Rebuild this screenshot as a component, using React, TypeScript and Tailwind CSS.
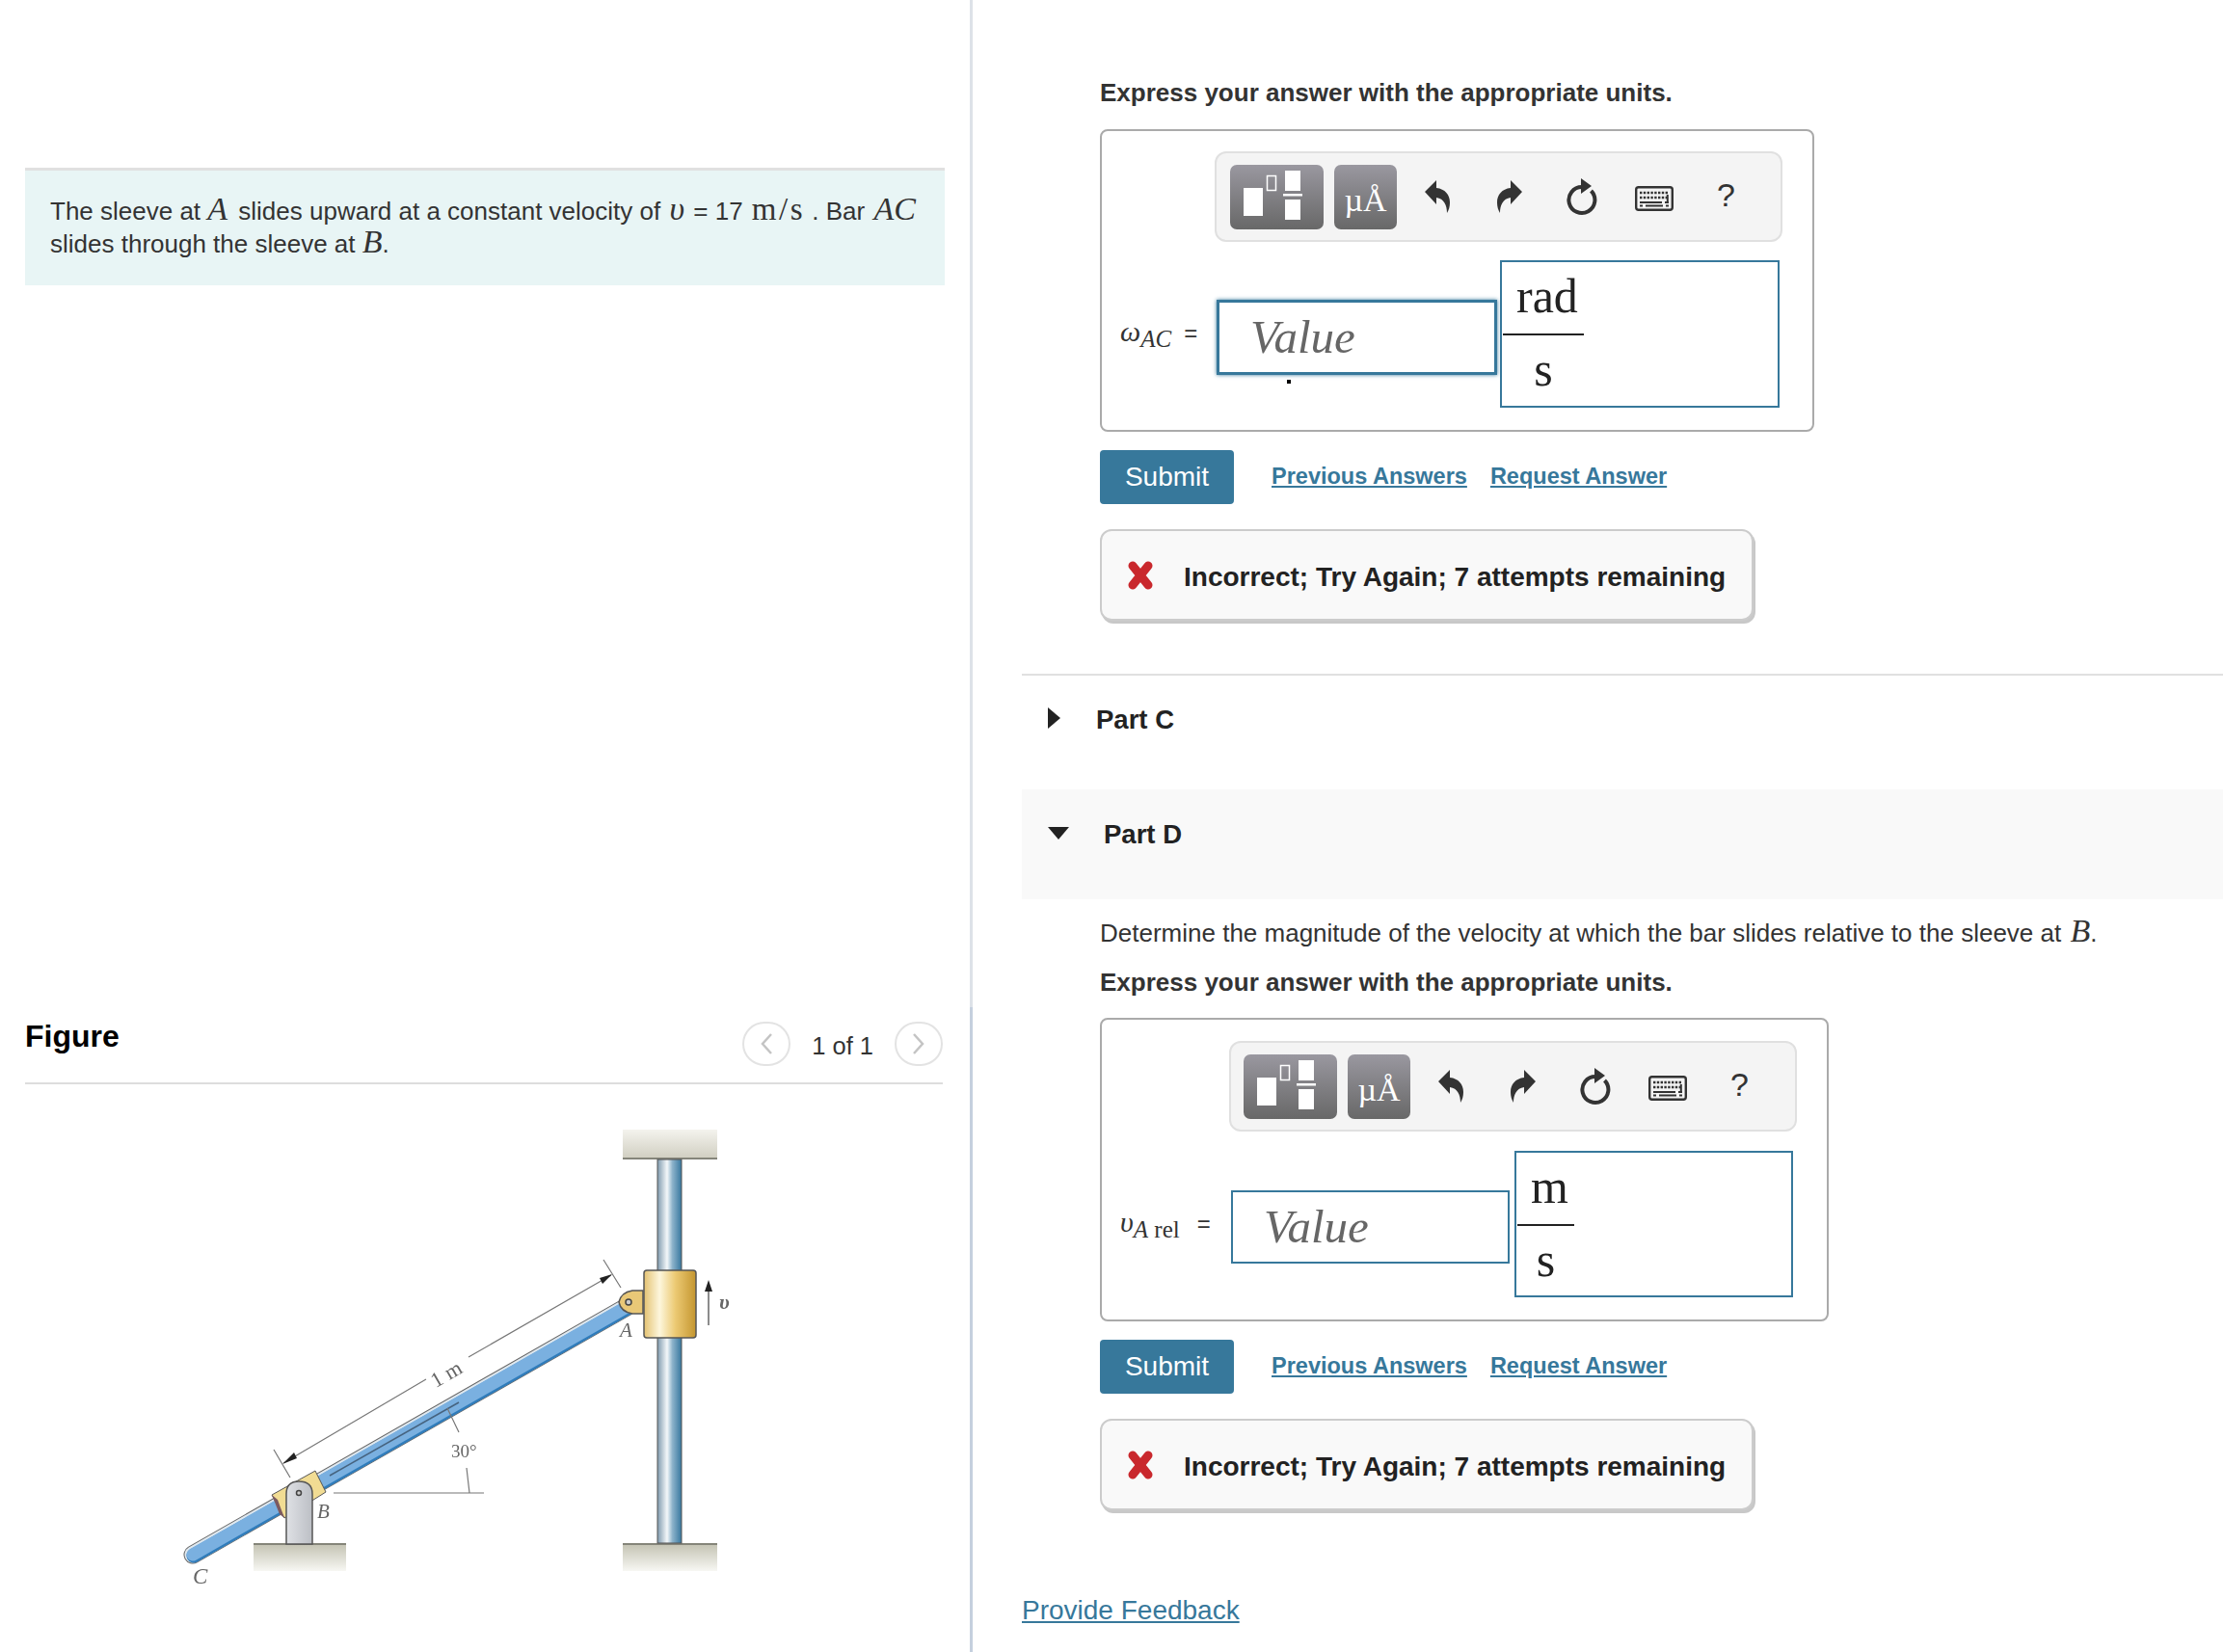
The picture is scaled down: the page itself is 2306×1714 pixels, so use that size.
import React from "react";

const serif = "font-['Liberation_Serif',serif]";

const Undo = ({ flip }: { flip?: boolean }) => (
  <svg width="28" height="36" viewBox="0 0 28 36" className={flip ? "-scale-x-100" : ""}>
    <path d="M1 13 L13 1 V9 C22 10 27 16 27 24 C27 28 26 32 24 35 C24 27 21 20 13 19 V26 Z" fill="#333" />
  </svg>
);

const Reset = () => (
  <svg width="34" height="40" viewBox="0 0 34 40">
    <path d="M17 10 A13.5 13.5 0 1 0 26.5 14" fill="none" stroke="#333" strokeWidth="4" />
    <path d="M16 1 L27 9 L16 17 Z" fill="#333" />
  </svg>
);

const Keyboard = () => (
  <svg width="40" height="26" viewBox="0 0 40 26">
    <rect x="1.2" y="1.2" width="37.6" height="23.6" rx="2.5" fill="none" stroke="#333" strokeWidth="2.4" />
    <path d="M5 7 H35 M5 12 H35" stroke="#333" strokeWidth="2.6" strokeDasharray="2.4 1.4" />
    <path d="M5 17 H28 M31 17 H35 M33.8 9 V18 M5 20.5 H8 M11 20.5 H29 M32 20.5 H35" stroke="#333" strokeWidth="2" />
  </svg>
);

const CrossIcon = () => (
  <svg width="30" height="32" viewBox="0 0 30 32" className="shrink-0">
    <path d="M7 6 L23 26 M23 6 L7 26" stroke="#c9282d" strokeWidth="9" strokeLinecap="round" />
  </svg>
);

const Toolbar = ({ className }: { className: string }) => (
  <div className={`flex h-[94px] w-[589px] items-center rounded-[12px] border-2 border-[#e0e0e0] bg-[#f4f4f4] ${className}`}>
    <div className="h-[67px] w-[97px] rounded-[7px] bg-linear-to-b from-[#9a98a0] to-[#686868]">
      <svg width="97" height="67" viewBox="0 0 97 67">
        <rect x="14" y="24" width="20" height="29" fill="#fff" />
        <rect x="38.5" y="11.5" width="9" height="15" fill="none" stroke="#fff" strokeWidth="1.5" />
        <rect x="57" y="6" width="16" height="21" fill="#fff" />
        <rect x="55" y="30" width="20" height="2.5" fill="#fff" />
        <rect x="57" y="36" width="16" height="21" fill="#fff" />
      </svg>
    </div>
    <div className={`ml-[11px] flex h-[67px] w-[65px] items-end justify-center rounded-[7px] bg-linear-to-b from-[#9a98a0] to-[#686868] pb-[10px] text-[34px] leading-[40px] text-white ${serif}`}>
      µÅ
    </div>
    <div className="ml-[4px] flex w-[75px] justify-center"><Undo /></div>
    <div className="flex w-[75px] justify-center"><Undo flip /></div>
    <div className="flex w-[75px] justify-center"><Reset /></div>
    <div className="flex w-[75px] justify-center pt-[4px]"><Keyboard /></div>
    <div className="flex w-[75px] justify-center pb-[3px] text-[34px] text-[#333]">?</div>
  </div>
);

const Fraction = ({ top }: { top: string }) => (
  <div className={`ml-px flex w-fit flex-col items-center text-[50px] text-[#222] ${serif}`}>
    <div className="flex h-[76px] items-end border-b-2 border-[#222] pb-[13px] pl-[14px] pr-[6px] leading-[52px]">{top}</div>
    <div className="pt-[9px] leading-[52px]">s</div>
  </div>
);

const Value = ({ className, children }: { className: string; children?: React.ReactNode }) => (
  <div className={`relative flex items-center pl-[32px] text-[49px] italic text-[#666] ${serif} ${className}`}>
    Value
    {children}
  </div>
);

const Incorrect = () => (
  <div className="mt-[26px] flex h-[95px] w-[678px] items-center rounded-[12px] border-2 border-[#ccc] bg-[#f9f9f9] pl-[25px] shadow-[2px_3px_0_#c8c8c8]">
    <CrossIcon />
    <span className="ml-[30px] pt-[5px] text-[28px] font-bold text-[#222]">Incorrect; Try Again; 7 attempts remaining</span>
  </div>
);

const Actions = () => (
  <div className="mt-[19px] flex items-center">
    <button className="h-[56px] w-[139px] rounded-[4px] bg-[#37789b] text-[28px] text-white">Submit</button>
    <a href="#" className="ml-[39px] text-[23.5px] font-bold text-[#37789b] underline">Previous Answers</a>
    <a href="#" className="ml-[24px] text-[23.5px] font-bold text-[#37789b] underline">Request Answer</a>
  </div>
);

const Express = ({ className }: { className: string }) => (
  <p className={`ml-[81px] h-[32px] text-[26px] leading-[32px] font-bold text-[#333] ${className}`}>
    Express your answer with the appropriate units.
  </p>
);

const Figure = () => (
  <svg width="620" height="510" viewBox="0 0 620 510" className="ml-[170px] mt-[35px] blur-[0.6px]">
    <defs>
      <linearGradient id="cap" x1="0" y1="0" x2="0" y2="1">
        <stop offset="0" stopColor="#f4f3ee" />
        <stop offset="1" stopColor="#cfcdbf" />
      </linearGradient>
      <linearGradient id="base" x1="0" y1="0" x2="0" y2="1">
        <stop offset="0" stopColor="#c4c3b3" />
        <stop offset="1" stopColor="#f7f7f3" />
      </linearGradient>
      <linearGradient id="pole" x1="0" y1="0" x2="1" y2="0">
        <stop offset="0" stopColor="#7e99ad" />
        <stop offset="0.4" stopColor="#f4f8fa" />
        <stop offset="0.62" stopColor="#8db3cb" />
        <stop offset="1" stopColor="#37779e" />
      </linearGradient>
      <linearGradient id="gold" x1="0" y1="0" x2="1" y2="0">
        <stop offset="0" stopColor="#e4c271" />
        <stop offset="0.3" stopColor="#fdf6dc" />
        <stop offset="0.6" stopColor="#ecca74" />
        <stop offset="1" stopColor="#c4952e" />
      </linearGradient>
      <linearGradient id="post" x1="0" y1="0" x2="1" y2="0">
        <stop offset="0" stopColor="#dfe1e5" />
        <stop offset="1" stopColor="#bcbfc5" />
      </linearGradient>
    </defs>

    <rect x="476" y="12" width="98" height="31" fill="url(#cap)" />
    <rect x="476" y="41" width="98" height="2" fill="#85857a" />
    <rect x="93" y="442" width="96" height="28" fill="url(#base)" />
    <rect x="93" y="441" width="96" height="2" fill="#85857a" />
    <rect x="476" y="442" width="98" height="28" fill="url(#base)" />
    <rect x="476" y="441" width="98" height="2" fill="#85857a" />

    <rect x="512" y="43" width="25" height="398" fill="url(#pole)" stroke="#555" strokeWidth="1" />

    <line x1="30" y1="453" x2="480" y2="196" stroke="#666" strokeWidth="19" strokeLinecap="round" />
    <line x1="30" y1="453" x2="480" y2="196" stroke="#dfe8ef" strokeWidth="17" strokeLinecap="round" />
    <line x1="31" y1="454" x2="481" y2="197" stroke="#2f7cbb" strokeWidth="15" strokeLinecap="round" />
    <line x1="30" y1="453" x2="480" y2="196" stroke="#7ab0e0" strokeWidth="13" strokeLinecap="round" />
    <path d="M172 371 L306 295" stroke="#46637f" strokeWidth="1.5" />

    <path d="M497 179 H486 Q474 181 472 191 Q474 201 486 203 H497 Z" fill="#e9c877" stroke="#555" strokeWidth="1.5" />
    <circle cx="482" cy="191" r="3" fill="#ccc" stroke="#444" strokeWidth="1.5" />
    <rect x="498" y="158" width="54" height="70" rx="3" fill="url(#gold)" stroke="#555" strokeWidth="1.5" />

    <path d="M112 391 L157 366 L168 388 L125 415 Z" fill="#f1dc93" stroke="#555" strokeWidth="1" />
    <path d="M112 391 L118 396 L125 415 L120 411 Z" fill="#7c5a60" />
    <path d="M127 442 V390 Q127 377 140 377 Q154 377 154 390 V442 Z" fill="url(#post)" stroke="#555" strokeWidth="1.5" />
    <circle cx="140" cy="389" r="2.5" fill="#ccc" stroke="#444" strokeWidth="1.5" />

    <path d="M124 358 L272 271 M316 248 L464 163 M114 344 L131 373 M456 147 L474 176" stroke="#777" strokeWidth="1.2" fill="none" />
    <path d="M123 359 L135 347 L138 353 Z M465 162 L452 166 L455 172 Z" fill="#222" />
    <path d="M294 301 L306 326 M314 363 L317 389 M176 389 H332" stroke="#777" strokeWidth="1.2" fill="none" />
    <path d="M565 215 V178" stroke="#666" strokeWidth="1.5" />
    <path d="M565 168 L569 180 H561 Z" fill="#222" />

    <g className={serif} fill="#666">
      <text x="275" y="272" fontSize="22" transform="rotate(-30 294 263)">1 m</text>
      <text x="298" y="352" fontSize="19">30°</text>
      <text x="473" y="227" fontSize="21" fontStyle="italic">A</text>
      <text x="159" y="415" fontSize="21" fontStyle="italic">B</text>
      <text x="30" y="483" fontSize="23" fontStyle="italic">C</text>
      <text x="576" y="198" fontSize="22" fontStyle="italic" fontWeight="bold">υ</text>
    </g>
  </svg>
);

const App = () => {
  return (
    <div className="flex h-[1714px] w-[2306px] overflow-hidden bg-white font-['Liberation_Sans',sans-serif] text-[#333]">
      <aside className="w-[1006px] shrink-0 pt-[174px]">
        <div className="ml-[26px] h-[122px] w-[954px] border-t-[3px] border-[#e0e0e0] bg-[#e8f5f5] pl-[26px] pt-[25px] text-[26px] leading-[34px]">
          <p>
            The sleeve at <i className={`mr-[4px] text-[34px] leading-[1px] ${serif}`}>A</i> slides upward at a constant velocity of{" "}
            <i className={`mx-[2px] text-[34px] leading-[1px] ${serif}`}>υ</i> = 17 <span className={`ml-[2px] text-[33px] leading-[1px] tracking-[2.5px] ${serif}`}>m/s</span> . Bar{" "}
            <i className={`ml-[2px] text-[34px] leading-[1px] ${serif}`}>AC</i>
          </p>
          <p>
            slides through the sleeve at <i className={`text-[34px] leading-[1px] ${serif}`}>B</i>.
          </p>
        </div>

        <div className="ml-[26px] mt-[759px] flex h-[70px] w-[952px] items-start justify-between border-b-2 border-[#ddd]">
          <h2 className="h-[40px] text-[32px] leading-[40px] font-bold text-black">Figure</h2>
          <div className="mt-[5px] flex items-center">
            <div className="flex h-[46px] w-[50px] items-center justify-center rounded-full border-2 border-[#e3e3e3]">
              <svg width="14" height="24" viewBox="0 0 14 24"><path d="M12 2 L3 12 L12 22" fill="none" stroke="#c4c4c4" strokeWidth="2.5" /></svg>
            </div>
            <span className="mx-[22px] pt-[4px] text-[25.5px]">1 of 1</span>
            <div className="flex h-[46px] w-[50px] items-center justify-center rounded-full border-2 border-[#e3e3e3]">
              <svg width="14" height="24" viewBox="0 0 14 24"><path d="M2 2 L11 12 L2 22" fill="none" stroke="#c4c4c4" strokeWidth="2.5" /></svg>
            </div>
          </div>
        </div>
        <Figure />
      </aside>

      <div className="flex w-[3px] shrink-0 flex-col">
        <div className="h-[1045px] bg-[#dde2e8]" />
        <div className="flex-1 bg-[#c5d0de]" />
      </div>

      <main className="flex-1 pl-[51px] pt-[80px]">
        <Express className="" />

        <div className="ml-[81px] mt-[22px]">
          <div className="h-[314px] w-[741px] rounded-[8px] border-2 border-[#aaa]">
            <Toolbar className="ml-[117px] mt-[21px] pl-[14px]" />
            <div className="mt-[19px] flex items-center pl-[19px]">
              <div className={`mb-[6px] w-[100px] text-[30px] text-[#333] ${serif}`}>
                <i>ω</i><sub className="text-[25px] italic">AC</sub>
                <span className="ml-[13px] font-['Liberation_Sans',sans-serif] text-[24px]">=</span>
              </div>
              <Value className="mt-[7px] h-[78px] w-[291px] border-[3px] border-[#37789b] shadow-[0_0_4px_#37789b]">
                <span className="absolute left-[70px] top-[80px] size-[4px] bg-black" />
              </Value>
              <div className="ml-[3px] h-[153px] w-[290px] border-2 border-[#37789b]">
                <Fraction top="rad" />
              </div>
            </div>
          </div>
          <Actions />
          <Incorrect />
        </div>

        <div className="mt-[55px] h-[2px] bg-[#e0e0e0]" />

        <div className="flex h-[118px] items-start pl-[27px] pt-[30px]">
          <svg width="13" height="22" viewBox="0 0 13 22" className="mt-[3px]"><path d="M0 0 L13 11 L0 22 Z" fill="#222" /></svg>
          <span className="ml-[37px] text-[27.5px] leading-[32px] font-bold text-[#222]">Part C</span>
        </div>

        <div className="flex h-[114px] items-start bg-[#f9f9f9] pl-[27px] pt-[31px]">
          <svg width="22" height="13" viewBox="0 0 22 13" className="mt-[8px]"><path d="M0 0 H22 L11 13 Z" fill="#222" /></svg>
          <span className="ml-[36px] text-[27.5px] leading-[32px] font-bold text-[#222]">Part D</span>
        </div>

        <p className="ml-[81px] mt-[19px] h-[32px] text-[26px] leading-[32px]">
          Determine the magnitude of the velocity at which the bar slides relative to the sleeve at <i className={`ml-[2px] text-[34px] leading-[1px] ${serif}`}>B</i>.
        </p>
        <Express className="mt-[19px]" />

        <div className="ml-[81px] mt-[21px]">
          <div className="h-[315px] w-[756px] rounded-[8px] border-2 border-[#aaa]">
            <Toolbar className="ml-[132px] mt-[22px] pl-[13px]" />
            <div className="mt-[20px] flex items-center pl-[19px]">
              <div className={`mb-[6px] w-[115px] text-[30px] text-[#333] ${serif}`}>
                <i>υ</i><sub className="text-[25px]"><i>A</i> rel</sub>
                <span className="ml-[18px] font-['Liberation_Sans',sans-serif] text-[24px]">=</span>
              </div>
              <Value className="mt-[6px] h-[76px] w-[289px] border-2 border-[#37789b]" />
              <div className="ml-[5px] h-[152px] w-[289px] border-2 border-[#37789b]">
                <Fraction top="m" />
              </div>
            </div>
          </div>
          <Actions />
          <Incorrect />
        </div>

        <a href="#" className="mt-[87px] block h-[34px] w-fit text-[28px] leading-[34px] text-[#37789b] underline">
          Provide Feedback
        </a>
      </main>
    </div>
  );
};

export default App;
